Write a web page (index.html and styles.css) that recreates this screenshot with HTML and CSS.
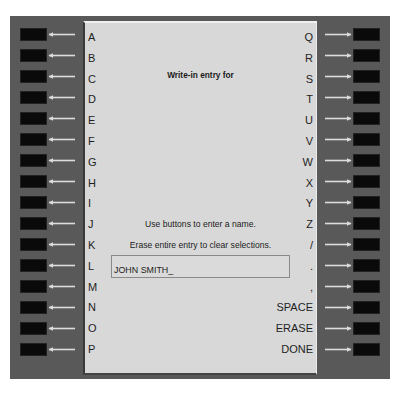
FILE: index.html
```html
<!DOCTYPE html>
<html>
<head>
<meta charset="utf-8">
<link rel="stylesheet" href="styles.css">
</head>
<body>
<div class="frame">
  <div class="side side-left" id="left"></div>
  <div class="panel">
    <div class="letters letters-left">
      <span>A</span><span>B</span><span>C</span><span>D</span><span>E</span><span>F</span><span>G</span><span>H</span>
      <span>I</span><span>J</span><span>K</span><span>L</span><span>M</span><span>N</span><span>O</span><span>P</span>
    </div>
    <div class="middle">
      <div class="title">Write-in entry for</div>
      <div class="note note-1">Use buttons to enter a name.</div>
      <div class="note note-2">Erase entire entry to clear selections.</div>
      <div class="entry">JOHN SMITH_</div>
    </div>
    <div class="letters letters-right">
      <span>Q</span><span>R</span><span>S</span><span>T</span><span>U</span><span>V</span><span>W</span><span>X</span>
      <span>Y</span><span>Z</span><span>/</span><span>.</span><span>,</span><span>SPACE</span><span>ERASE</span><span>DONE</span>
    </div>
  </div>
  <div class="side side-right" id="right"></div>
</div>
<script src="app.js"></script>
</body>
</html>
```

FILE: app.js
```js
var leftArrow = '<svg class="arrow" width="28" height="7" viewBox="0 0 28 7"><path d="M1 3.5 H27" stroke="#dcdcdc" stroke-width="1.6"/><path d="M0.5 3.5 L5 1.2 L5 5.8 Z" fill="#dcdcdc"/></svg>';
var rightArrow = '<svg class="arrow" width="28" height="7" viewBox="0 0 28 7"><path d="M1 3.5 H27" stroke="#dcdcdc" stroke-width="1.6"/><path d="M27.5 3.5 L23 1.2 L23 5.8 Z" fill="#dcdcdc"/></svg>';
var l = document.getElementById('left'), r = document.getElementById('right');
var lh = '', rh = '';
for (var i = 0; i < 16; i++) {
  lh += '<div class="row"><div class="btn"></div>' + leftArrow + '</div>';
  rh += '<div class="row">' + rightArrow + '<div class="btn"></div></div>';
}
l.innerHTML = lh;
r.innerHTML = rh;
```

FILE: styles.css
```css
html, body {
  margin: 0;
  padding: 0;
  background: #ffffff;
}
body {
  font-family: "Liberation Sans", Arial, sans-serif;
  color: #1c1c1c;
}
.frame {
  margin: 16px 0 0 10px;
  width: 380px;
  height: 363px;
  background: #595959;
  display: flex;
  align-items: flex-start;
}
.side {
  width: 73px;
  padding-top: 8px;
  display: flex;
  flex-direction: column;
  flex: none;
}
.row {
  height: 21px;
  display: flex;
  align-items: center;
}
.side-left .row {
  padding-left: 10px;
  gap: 1px;
}
.side-right .row {
  padding-left: 7px;
  gap: 1px;
}
.btn {
  width: 27px;
  height: 13px;
  background: #0a0a0a;
  box-sizing: border-box;
  border: 1px solid #222;
}
.arrow {
  display: block;
}
.panel {
  flex: none;
  width: 234px;
  height: 354px;
  margin-top: 5px;
  box-sizing: border-box;
  background: #d8d8d8;
  border-top: 2px solid #f0f0f0;
  border-left: 2px solid #3a3a3a;
  border-right: 1px solid #ececec;
  border-bottom: 2px solid #444;
  padding: 1px 3px 0 3px;
  display: grid;
  grid-template-columns: minmax(0, 1fr);
  grid-template-rows: auto;
}
.letters,
.middle {
  grid-area: 1 / 1;
}
.letters {
  display: flex;
  flex-direction: column;
  padding-top: 3px;
  font-size: 11px;
  color: #1e1e1e;
}
.letters span {
  height: 20.8px;
  line-height: 20.8px;
}
.letters-left {
  justify-self: start;
}
.letters-right {
  justify-self: end;
  align-items: flex-end;
}
.middle {
  display: grid;
  grid-template-rows: repeat(16, 21px);
  justify-items: center;
  align-items: center;
}
.title {
  grid-row: 3;
  font-size: 8.3px;
  font-weight: bold;
  margin-top: -3px;
}
.note {
  font-size: 8.6px;
}
.note-1 {
  grid-row: 10;
}
.note-2 {
  grid-row: 11;
}
.entry {
  grid-row: 12;
  align-self: start;
  width: 179px;
  height: 23px;
  box-sizing: border-box;
  border: 1px solid #8a8a8a;
  background: #dadada;
  font-size: 8.9px;
  display: flex;
  align-items: flex-end;
  padding: 0 0 2px 2px;
}
```
